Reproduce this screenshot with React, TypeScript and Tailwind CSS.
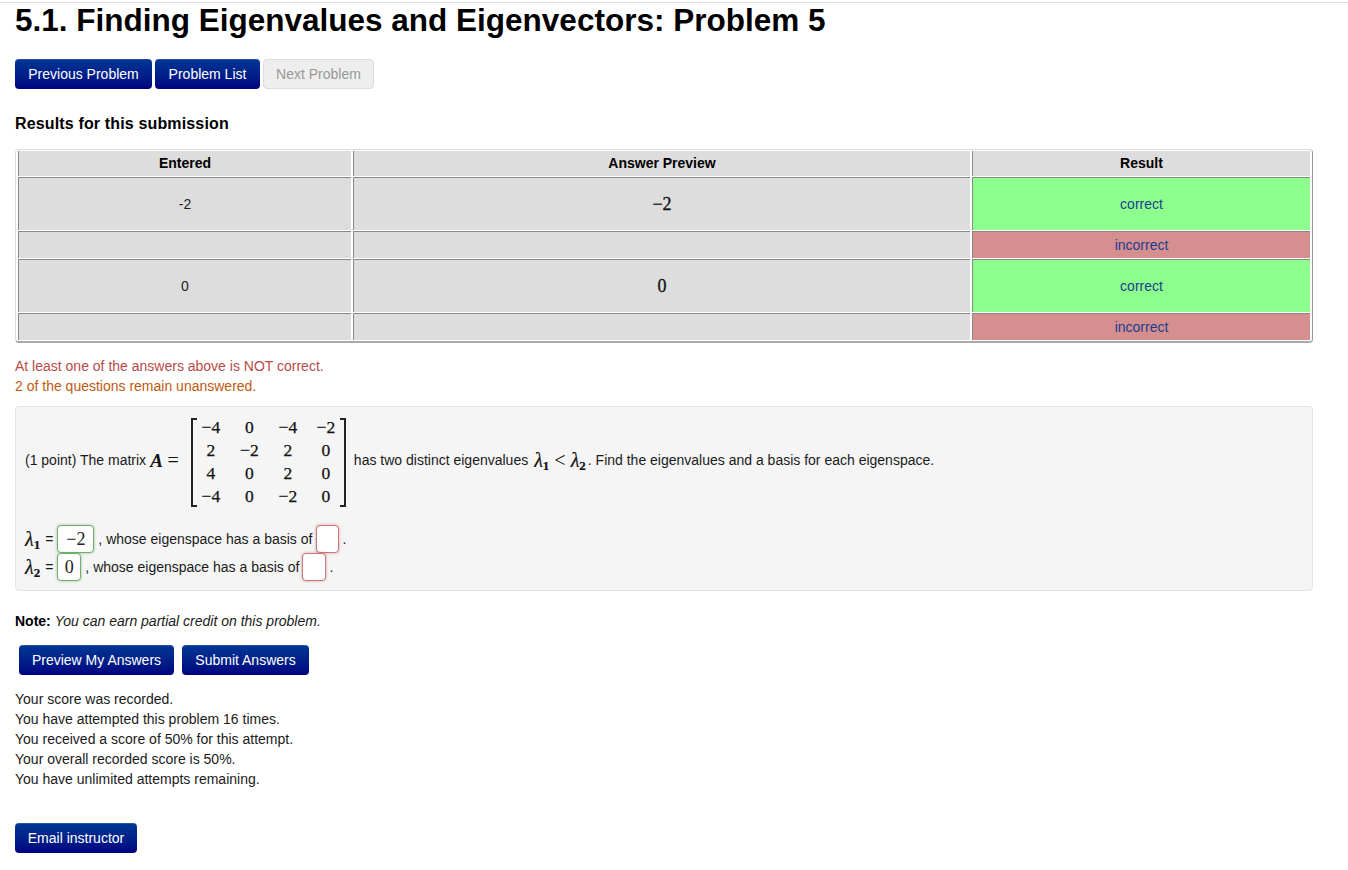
import type { ReactNode } from 'react'

function NavButton({ children, disabled, width }: { children: ReactNode; disabled?: boolean; width: string }) {
  if (disabled) {
    return (
      <span className={`inline-block h-[30px] ${width} text-center leading-[28px] text-[14px] text-[#999] bg-[#eee] border border-[#ddd] rounded-[4px]`}>
        {children}
      </span>
    )
  }
  return (
    <button className={`h-[30px] ${width} text-center text-[14px] text-white bg-gradient-to-b from-[#003594] to-[#000080] rounded-[4px] shadow-[inset_0_1px_0_rgba(255,255,255,0.15)]`}>
      {children}
    </button>
  )
}

const rows = [
  { entered: '-2', preview: '\u22122', ok: true },
  { entered: '', preview: '', ok: false },
  { entered: '0', preview: '0', ok: true },
  { entered: '', preview: '', ok: false },
]

function ResultsTable() {
  return (
    <table className="w-[1298px] border-separate border-spacing-x-[2px] border-spacing-y-[1px] border-t border-l border-t-[#ddd] border-l-[#ddd] border-r border-b-2 border-r-[#999] border-b-[#aaa] rounded-[4px] text-[14px] table-fixed">
      <colgroup>
        <col className="w-[333px]" />
        <col className="w-[617px]" />
        <col />
      </colgroup>
      <thead>
        <tr>
          {['Entered', 'Answer Preview', 'Result'].map(h => (
            <th key={h} className="h-[25px] pb-[1px] bg-[#ddd] font-bold text-center text-black border-l border-[#888]">{h}</th>
          ))}
        </tr>
      </thead>
      <tbody>
        {rows.map((r, i) => (
          <tr key={i}>
            <td className={`${r.ok ? 'h-[53px]' : 'h-[27px]'} bg-[#ddd] text-center text-[#222] border-t border-l border-[#888]`}>{r.entered}</td>
            <td className="bg-[#ddd] text-center text-[#111] text-[18px] font-['Liberation_Serif',serif] [-webkit-text-stroke:0.3px] border-t border-l border-[#888]">{r.preview}</td>
            <td className={`${r.ok ? 'bg-[#8cff8c]' : 'bg-[#d58f8f]'} text-center text-[#1d3d8f] border-t border-l border-[#888]`}>
              {r.ok ? 'correct' : 'incorrect'}
            </td>
          </tr>
        ))}
      </tbody>
    </table>
  )
}

const matrix = [
  ['\u22124', '0', '\u22124', '\u22122'],
  ['2', '\u22122', '2', '0'],
  ['4', '0', '2', '0'],
  ['\u22124', '0', '\u22122', '0'],
]

function Matrix() {
  return (
    <span className="inline-flex items-stretch h-[89px] font-['Liberation_Serif',serif] text-[17.5px] text-[#111] [-webkit-text-stroke:0.25px] ml-[12px] mr-[8px] mt-[4px]">
      <span className="w-[6px] border-l-2 border-t-2 border-b-2 border-[#222]" />
      <span className="grid grid-cols-[38px_39px_38px_38px] grid-rows-[repeat(4,18px)] gap-y-[5.3px] items-center justify-items-center -ml-[5px] w-[148px]">
        {matrix.flat().map((v, i) => (
          <span key={i}>{v}</span>
        ))}
      </span>
      <span className="w-[6px] border-r-2 border-t-2 border-b-2 border-[#222]" />
    </span>
  )
}

function Lambda({ n }: { n: number }) {
  return (
    <span className="font-['Liberation_Serif',serif] text-[20px] text-[#111] [-webkit-text-stroke:0.2px]">
      <i>λ</i>
      <sub className="text-[13px] font-bold not-italic">{n}</sub>
    </span>
  )
}

function AnswerBox({ value, ok, w }: { value?: string; ok: boolean; w: string }) {
  return (
    <span
      className={`inline-flex items-center justify-center h-[28px] ${w} bg-white rounded-[4px] border font-['Liberation_Serif',serif] text-[18px] text-[#222] ${
        ok
          ? 'border-[#6fb06f] shadow-[0_0_3px_rgba(90,160,90,0.6)]'
          : 'border-[#c87878] shadow-[0_0_3px_rgba(200,90,90,0.6)]'
      }`}
    >
      {value}
    </span>
  )
}

export default function App() {
  return (
    <div className="min-h-[868px] bg-white font-['Liberation_Sans',Arial,sans-serif] text-[14px] leading-[20px] text-[#1a1a1a] border-t border-[#ddd] mt-[2px]">
      <div className="px-[15px]">
        <h1 className="text-[31.5px] leading-[34px] font-bold text-black">5.1. Finding Eigenvalues and Eigenvectors: Problem 5</h1>
        <div className="flex gap-[3px] mt-[22px]">
          <NavButton width="w-[137px]">Previous Problem</NavButton>
          <NavButton width="w-[105px]">Problem List</NavButton>
          <NavButton width="w-[111px]" disabled>Next Problem</NavButton>
        </div>
        <h3 className="mt-[25px] text-[16px] leading-[20px] font-bold text-black tracking-[0.15px]">Results for this submission</h3>
        <div className="mt-[15px]">
          <ResultsTable />
        </div>
        <div className="mt-[13px] text-[#b94a48]">At least one of the answers above is NOT correct.</div>
        <div className="text-[#c05a10]">2 of the questions remain unanswered.</div>

        <div className="mt-[10px] w-[1298px] h-[185px] bg-[#f5f5f5] border border-[#e3e3e3] rounded-[4px] px-[9px] pt-[9px]">
          <div className="flex items-center h-[88px]">
            <span>(1 point) The matrix</span>
            <span className="font-['Liberation_Serif',serif] text-[19px] text-[#111] ml-[4px]"><b><i>A</i></b> <span className="text-[20px]">=</span></span>
            <Matrix />
            <span>has two distinct eigenvalues</span>
            <span className="ml-[6px] flex items-baseline gap-[5px]">
              <Lambda n={1} />
              <span className="font-['Liberation_Serif',serif] text-[20px] text-[#111]">&lt;</span>
              <Lambda n={2} />
            </span>
            <span className="ml-[2px]">. Find the eigenvalues and a basis for each eigenspace.</span>
          </div>
          <div className="mt-[21px] flex items-center h-[28px]">
            <Lambda n={1} />
            <span className="ml-[5px] mr-[4px]">=</span>
            <AnswerBox value={'\u22122'} ok w="w-[37px]" />
            <span className="ml-[4px] mr-[4px]">, whose eigenspace has a basis of</span>
            <AnswerBox ok={false} w="w-[23px]" />
            <span className="ml-[3px]">.</span>
          </div>
          <div className="flex items-center h-[28px]">
            <Lambda n={2} />
            <span className="ml-[5px] mr-[4px]">=</span>
            <AnswerBox value="0" ok w="w-[24px]" />
            <span className="ml-[4px] mr-[3px]">, whose eigenspace has a basis of</span>
            <AnswerBox ok={false} w="w-[24px]" />
            <span className="ml-[3px]">.</span>
          </div>
        </div>

        <div className="mt-[20px]">
          <b className="text-black">Note:</b> <i>You can earn partial credit on this problem.</i>
        </div>
        <div className="flex gap-[8px] mt-[14px] ml-[4px]">
          <NavButton width="w-[155px]">Preview My Answers</NavButton>
          <NavButton width="w-[127px]">Submit Answers</NavButton>
        </div>
        <div className="mt-[14px]">
          <div>Your score was recorded.</div>
          <div>You have attempted this problem 16 times.</div>
          <div>You received a score of 50% for this attempt.</div>
          <div>Your overall recorded score is 50%.</div>
          <div>You have unlimited attempts remaining.</div>
        </div>
        <div className="mt-[34px]">
          <NavButton width="w-[122px]">Email instructor</NavButton>
        </div>
      </div>
    </div>
  )
}
